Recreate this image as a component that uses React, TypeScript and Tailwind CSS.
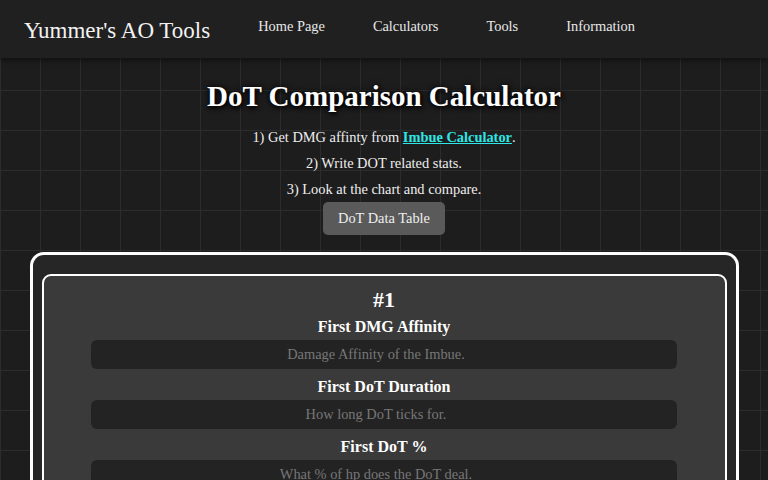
import React from 'react'

const serif = "font-['Liberation_Serif','Times_New_Roman',serif]"

function Field({ label, placeholder }: { label: string; placeholder: string }) {
  return (
    <div className="flex flex-col items-center">
      <div className="text-[16px] font-bold leading-[22px] text-white">{label}</div>
      <input
        className="mt-[2px] h-[29px] w-[586px] rounded-[6px] bg-[#232323] pr-[16px] text-center text-[14.4px] text-white placeholder:text-[#777777] outline-none"
        placeholder={placeholder}
      />
    </div>
  )
}

export default function App() {
  const links = ['Home Page', 'Calculators', 'Tools', 'Information']

  return (
    <div
      className={`${serif} min-h-[480px] w-full overflow-hidden bg-[#1d1d1d] bg-[linear-gradient(to_right,#2c2c2c_1px,transparent_1px),linear-gradient(to_bottom,#2c2c2c_1px,transparent_1px)] bg-[length:40px_40px] bg-[position:0_10px] text-white`}
    >
      <header className="relative z-10 flex h-[58px] items-center gap-[48px] bg-[#202020] px-[24px] shadow-[0_2px_6px_rgba(0,0,0,0.5)]">
        <div className="mt-[2px] text-[23px] leading-none text-[#f2f2f2]">Yummer's AO Tools</div>
        <nav className="-mt-[4px] flex gap-[48px] text-[14.4px] text-[#e8e8e8]">
          {links.map((l) => (
            <a key={l} href="#">
              {l}
            </a>
          ))}
        </nav>
      </header>

      <main className="flex flex-col items-center pt-[20px]">
        <h1 className="text-[29px] font-bold leading-[36px] text-white [text-shadow:1px_2px_4px_#000,0_0_6px_#000]">
          DoT Comparison Calculator
        </h1>
        <div className="mt-[10px] flex flex-col items-center text-[14.4px] leading-[26px] text-[#eeeeee]">
          <p>
            1) Get DMG affinty from{' '}
            <a href="#" className="font-bold text-[#2ee6e6] underline">
              Imbue Calculator
            </a>
            .
          </p>
          <p>2) Write DOT related stats.</p>
          <p>3) Look at the chart and compare.</p>
        </div>
        <button className="h-[33px] rounded-[5px] bg-[#5a5a5a] px-[15px] text-[14.4px] text-[#eeeeee]">
          DoT Data Table
        </button>

        <section className="mt-[17px] w-[709px] rounded-t-[14px] border-[3px] border-b-0 border-white bg-[#262626] px-[9px] pt-[19px] pb-[20px]">
          <div className="flex flex-col items-center gap-[7px] rounded-[9px] border-2 border-white bg-[#3a3a3a] pt-[10px] pb-[20px]">
            <div className="-mb-[5px] text-[22px] font-bold leading-[28px]">#1</div>
            <Field label="First DMG Affinity" placeholder="Damage Affinity of the Imbue." />
            <Field label="First DoT Duration" placeholder="How long DoT ticks for." />
            <Field label="First DoT %" placeholder="What % of hp does the DoT deal." />
          </div>
        </section>
      </main>
    </div>
  )
}
